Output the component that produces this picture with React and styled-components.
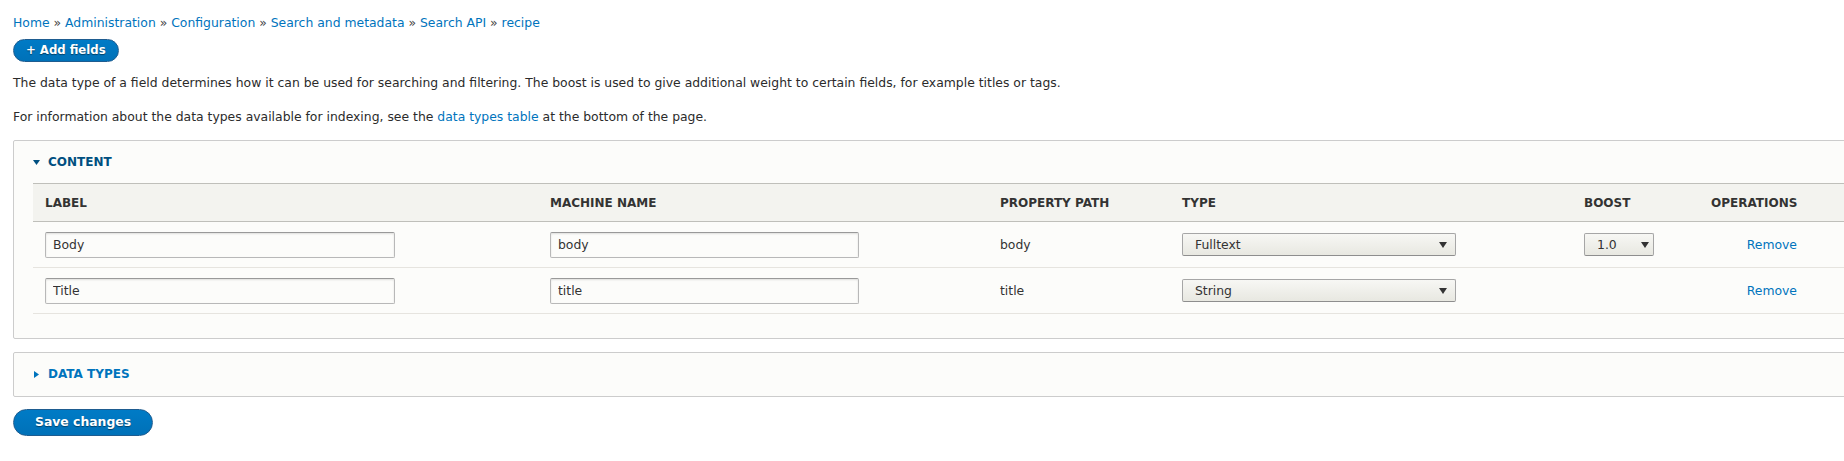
import React from "react";
import styled, { createGlobalStyle } from "styled-components";

const Global = createGlobalStyle`
  html, body { margin: 0; padding: 0; background: #fff; overflow: hidden; }
  body {
    font-family: "DejaVu Sans", "Liberation Sans", sans-serif;
    font-size: 12.4px;
    line-height: 20px;
    color: #2b2b2b;
  }
  * { box-sizing: border-box; }
`;

const Page = styled.main`
  padding: 13px 0 0 13px;
  display: flex;
  flex-direction: column;
  align-items: flex-start;
`;

const Breadcrumb = styled.nav`
  display: flex;
  white-space: pre;
  color: #444;
`;

const Link = styled.a`
  color: #0074bd;
  text-decoration: none;
`;

const Button = styled.button`
  font-family: "DejaVu Sans", sans-serif;
  font-weight: bold;
  font-size: ${(p) => (p.$small ? "11.7px" : "12.4px")};
  height: ${(p) => (p.$small ? "23px" : "27px")};
  padding: 0 ${(p) => (p.$small ? "12px" : "21px")};
  margin-top: ${(p) => p.$mt}px;
  color: #fff;
  border: 1px solid #1e5c90;
  border-radius: 20em;
  background: linear-gradient(to bottom, #007bc6, #0071b8);
  text-shadow: 0 1px 1px rgba(0, 0, 0, 0.45);
  display: inline-flex;
  align-items: center;
  line-height: 1;
  cursor: pointer;
`;

const Para = styled.p`
  margin: ${(p) => p.$mt}px 0 0 0;
`;

const Fieldset = styled.section`
  margin-top: ${(p) => p.$mt}px;
  width: 1880px;
  background: #fcfcfa;
  border: 1px solid #ccc;
  border-radius: 2px;
  padding: 0 19px ${(p) => p.$pb}px 19px;
`;

const Summary = styled.div`
  display: flex;
  align-items: center;
  gap: 8px;
  padding: ${(p) => (p.$open ? "11px 0" : "11px 0 12px")};
  line-height: 20px;
  font-size: 12px;
  font-weight: bold;
  text-transform: uppercase;
  color: ${(p) => (p.$open ? "#004f80" : "#0074bd")};
`;

const Caret = styled.svg`
  width: 7px;
  height: 7px;
  flex: none;
`;

const cols = "505px 450px 182px 402px 127px 110px 1fr";

const HeadRow = styled.div`
  display: grid;
  grid-template-columns: ${cols};
  height: 39px;
  align-items: center;
  background: #f3f3ef;
  border-top: 1px solid #bfbfba;
  border-bottom: 1px solid #bfbfba;
  font-size: 12px;
  font-weight: bold;
  text-transform: uppercase;
  color: #333;
`;

const Row = styled.div`
  display: grid;
  grid-template-columns: ${cols};
  height: 46px;
  align-items: center;
  border-bottom: 1px solid #e6e4df;
  color: #333;
`;

const Cell = styled.div`
  padding: 0 12px;
  text-align: ${(p) => (p.$right ? "right" : "left")};
  white-space: nowrap;
`;

const TextInput = styled.input`
  font-family: "DejaVu Sans", sans-serif;
  font-size: 12.4px;
  color: #333;
  width: ${(p) => p.$w}px;
  height: 26px;
  padding: 0 7px;
  background: #fcfcfa;
  border: 1px solid #b8b8b8;
  border-top-color: #999;
  border-radius: 2px;
  box-shadow: inset 0 1px 2px rgba(0, 0, 0, 0.12);
  display: block;
  outline: none;
`;

const SelectBox = styled.div`
  width: ${(p) => p.$w}px;
  height: 23px;
  display: flex;
  align-items: center;
  justify-content: space-between;
  padding: 0 ${(p) => p.$pr}px 0 12px;
  border: 1px solid #a6a6a6;
  border-bottom-color: #8e8e8e;
  border-radius: 2px;
  background: linear-gradient(to bottom, #f7f7f4, #e8e8e1);
  color: #333;
`;

const Remove = styled.a`
  color: #0074bd;
  text-decoration: none;
`;

function Arrow() {
  return (
    <svg width="8" height="6" viewBox="0 0 8 6">
      <path d="M0 0 H8 L4 6 Z" fill="#333" />
    </svg>
  );
}

const crumbs = ["Home", "Administration", "Configuration", "Search and metadata", "Search API", "recipe"];

const rows = [
  { label: "Body", machine: "body", path: "body", type: "Fulltext", boost: "1.0" },
  { label: "Title", machine: "title", path: "title", type: "String", boost: null },
];

export default function App() {
  return (
    <>
      <Global />
      <Page>
        <Breadcrumb>
          {crumbs.map((c, i) => (
            <React.Fragment key={c}>
              {i > 0 && <span> » </span>}
              <Link href="#">{c}</Link>
            </React.Fragment>
          ))}
        </Breadcrumb>
        <Button $small $mt={6}>+ Add fields</Button>
        <Para $mt={11}>
          The data type of a field determines how it can be used for searching and filtering. The boost is used to give
          additional weight to certain fields, for example titles or tags.
        </Para>
        <Para $mt={14}>
          For information about the data types available for indexing, see the <Link href="#">data types table</Link> at
          the bottom of the page.
        </Para>
        <Fieldset $mt={13} $pb={24}>
          <Summary $open>
            <Caret viewBox="0 0 7 7">
              <path d="M0 1 H7 L3.5 6 Z" fill="#004f80" />
            </Caret>
            Content
          </Summary>
          <HeadRow>
            <Cell>Label</Cell>
            <Cell>Machine name</Cell>
            <Cell>Property path</Cell>
            <Cell>Type</Cell>
            <Cell>Boost</Cell>
            <Cell $right>Operations</Cell>
            <Cell />
          </HeadRow>
          {rows.map((r) => (
            <Row key={r.machine}>
              <Cell>
                <TextInput $w={350} defaultValue={r.label} />
              </Cell>
              <Cell>
                <TextInput $w={309} defaultValue={r.machine} />
              </Cell>
              <Cell>{r.path}</Cell>
              <Cell>
                <SelectBox $w={274} $pr={8}>
                  <span>{r.type}</span>
                  <Arrow />
                </SelectBox>
              </Cell>
              <Cell>
                {r.boost && (
                  <SelectBox $w={70} $pr={4}>
                    <span>{r.boost}</span>
                    <Arrow />
                  </SelectBox>
                )}
              </Cell>
              <Cell $right>
                <Remove href="#">Remove</Remove>
              </Cell>
              <Cell />
            </Row>
          ))}
        </Fieldset>
        <Fieldset $mt={13} $pb={0}>
          <Summary>
            <Caret viewBox="0 0 7 7">
              <path d="M1 0 V7 L6 3.5 Z" fill="#0074bd" />
            </Caret>
            Data types
          </Summary>
        </Fieldset>
        <Button $mt={12}>Save changes</Button>
      </Page>
    </>
  );
}
